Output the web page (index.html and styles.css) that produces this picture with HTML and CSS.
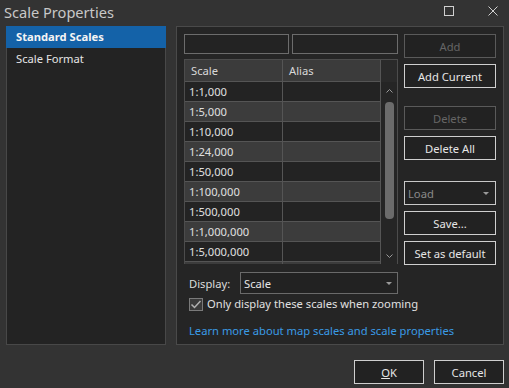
FILE: index.html
```html
<!DOCTYPE html>
<html>
<head>
<meta charset="utf-8">
<link rel="stylesheet" href="styles.css">
</head>
<body>
<div class="dialog">
  <div class="titlebar">
    <span class="title">Scale Properties</span>
    <div class="win-btns">
      <svg class="wbtn" width="12" height="12" viewBox="0 0 12 12"><rect x="1.5" y="1.5" width="9" height="9" fill="none" stroke="#d0d0d0" stroke-width="1"/></svg>
      <svg class="wbtn" width="12" height="12" viewBox="0 0 12 12"><path d="M1.5 1.5 L10.5 10.5 M10.5 1.5 L1.5 10.5" stroke="#d0d0d0" stroke-width="1" fill="none"/></svg>
    </div>
  </div>
  <div class="main">
    <div class="nav">
      <div class="nav-item selected">Standard Scales</div>
      <div class="nav-item">Scale Format</div>
    </div>
    <div class="panel">
      <div class="left-col">
        <div class="inputs">
          <div class="input w1"></div>
          <div class="input w2"></div>
        </div>
        <div class="table">
          <div class="grid">
            <div class="th">Scale</div><div class="th">Alias</div>
            <div class="td">1:1,000</div><div class="td"></div>
            <div class="td alt">1:5,000</div><div class="td alt"></div>
            <div class="td">1:10,000</div><div class="td"></div>
            <div class="td alt">1:24,000</div><div class="td alt"></div>
            <div class="td">1:50,000</div><div class="td"></div>
            <div class="td alt">1:100,000</div><div class="td alt"></div>
            <div class="td">1:500,000</div><div class="td"></div>
            <div class="td alt">1:1,000,000</div><div class="td alt"></div>
            <div class="td">1:5,000,000</div><div class="td"></div>
            <div class="td alt"></div><div class="td alt"></div>
          </div>
          <div class="scroll">
            <div class="scroll-head"></div>
            <svg class="arrow" width="17" height="20" viewBox="0 0 17 20"><path d="M5.5 10.5 L8.5 7.5 L11.5 10.5" stroke="#9a9a9a" stroke-width="1" fill="none"/></svg>
            <div class="thumb"></div>
            <div class="track-rest"></div>
            <svg class="arrow" width="17" height="20" viewBox="0 0 17 20"><path d="M5.5 8.5 L8.5 11.5 L11.5 8.5" stroke="#9a9a9a" stroke-width="1" fill="none"/></svg>
          </div>
        </div>
        <div class="display-row">
          <span class="label">Display:</span>
          <div class="select"><span class="sel-text">Scale</span><span class="caret"></span></div>
        </div>
        <div class="check-row">
          <span class="checkbox"><svg width="12" height="11" viewBox="0 0 12 11"><path d="M1.5 5.5 L4.5 8.5 L10.5 2" stroke="#b0b0b0" stroke-width="1.5" fill="none"/></svg></span>
          <span class="check-label">Only display these scales when zooming</span>
        </div>
        <div class="link">Learn more about map scales and scale properties</div>
      </div>
      <div class="right-col">
        <div class="btn disabled">Add</div>
        <div class="btn g1">Add Current</div>
        <div class="btn disabled g2">Delete</div>
        <div class="btn g3">Delete All</div>
        <div class="btn dropdown g4"><span>Load</span><span class="caret"></span></div>
        <div class="btn g3">Save...</div>
        <div class="btn g3">Set as default</div>
      </div>
    </div>
  </div>
  <div class="footer">
    <div class="btn fbtn"><span class="u">O</span>K</div>
    <div class="btn fbtn">Cancel</div>
  </div>
</div>
</body>
</html>
```
FILE: styles.css
```css
html, body {
  margin: 0;
  padding: 0;
  background: #333333;
  width: 509px;
  height: 388px;
  overflow: hidden;
}
.dialog {
  font-family: "Segoe UI", "Noto Sans", "DejaVu Sans", sans-serif;
  font-size: 11.2px;
  line-height: 15px;
  color: #e2e2e2;
  display: flex;
  flex-direction: column;
  width: 509px;
  height: 388px;
}
.titlebar {
  height: 26px;
  display: flex;
  align-items: center;
  justify-content: space-between;
  padding: 0 6px 0 4px;
}
.title {
  font-size: 14.6px;
  line-height: 20px;
  color: #c8c8c8;
  margin-top: -2px;
}
.win-btns {
  display: flex;
  gap: 32px;
  margin-top: -4px;
  margin-right: 4px;
}
.wbtn { display: block; }
.main {
  display: flex;
  gap: 10px;
  padding: 0 5px 0 6px;
  height: 319px;
}
.nav {
  width: 158px;
  background: #232323;
  border: 1px solid #484848;
  border-top: none;
  display: flex;
  flex-direction: column;
}
.nav-item {
  height: 22px;
  line-height: 21px;
  padding-left: 9px;
  color: #e6e6e6;
}
.nav-item.selected {
  background: #1462a8;
  font-weight: bold;
  color: #f4f4f4;
  margin: 0 -1px;
  padding-left: 10px;
}
.panel {
  flex: 1;
  border: 1px solid #4a4a4a;
  background: #252525;
  display: flex;
  gap: 6px;
  padding: 7px 7px 0 7px;
}
.left-col {
  width: 214px;
  display: flex;
  flex-direction: column;
}
.inputs {
  display: flex;
  gap: 3px;
  height: 19px;
}
.input {
  border: 1px solid #6c6c6c;
  background: #232323;
  box-sizing: border-box;
  height: 20px;
}
.w1 { width: 105px; }
.w2 { width: 106px; }
.table {
  margin-top: 6px;
  height: 205px;
  width: 214px;
  box-sizing: border-box;
  border: 1px solid #4c4c4c;
  border-bottom: none;
  display: flex;
  overflow: hidden;
}
.grid {
  width: 196px;
  display: grid;
  grid-template-columns: 98px 98px;
  grid-auto-rows: 20px;
  grid-template-rows: 22px;
  align-content: start;
}
.th {
  background: #3b3b3b;
  color: #d8d8d8;
  line-height: 21px;
  padding-left: 6px;
  border-bottom: 1px solid #555;
  border-right: 1px solid #555;
  box-sizing: border-box;
}
.td {
  background: #232323;
  color: #e0e0e0;
  line-height: 19px;
  padding-left: 4px;
  border-bottom: 1px solid #555;
  border-right: 1px solid #555;
  box-sizing: border-box;
}
.td.alt { background: #3c3c3c; }
.scroll {
  flex: 1;
  background: #252525;
  display: flex;
  flex-direction: column;
  align-items: center;
}
.scroll-head { height: 22px; width: 100%; background: #2a2a2a; flex: none; }
.arrow { display: block; flex: none; }
.thumb {
  width: 9px;
  height: 117px;
  background: #6b6b6b;
  border-radius: 4px;
  flex: none;
}
.track-rest { height: 27px; flex: none; }
.display-row {
  display: flex;
  align-items: center;
  height: 22px;
  margin-top: 8px;
  padding-left: 5px;
}
.label { color: #dcdcdc; width: 51px; line-height: 15px; }
.select {
  width: 158px;
  height: 22px;
  box-sizing: border-box;
  border: 1px solid #6a6a6a;
  background: #222;
  display: flex;
  align-items: center;
  justify-content: space-between;
  padding: 0 4px 0 3px;
  color: #e6e6e6;
}
.sel-text { line-height: 15px; }
.caret {
  width: 0;
  height: 0;
  border-left: 3px solid transparent;
  border-right: 3px solid transparent;
  border-top: 3px solid #9a9a9a;
  margin-right: 1px;
}
.check-row {
  display: flex;
  align-items: center;
  gap: 4px;
  padding-left: 5px;
  margin-top: 3px;
  height: 14px;
  color: #e0e0e0;
}
.check-label { white-space: nowrap; line-height: 14px; }
.checkbox {
  width: 14px;
  height: 13px;
  box-sizing: border-box;
  border: 1px solid #7a7a7a;
  background: #3a3a3a;
  display: flex;
  align-items: center;
  justify-content: center;
  flex: none;
}
.checkbox svg { display: block; }
.link {
  margin-top: 12px;
  padding-left: 5px;
  color: #3a9be6;
  white-space: nowrap;
}
.right-col {
  width: 92px;
  display: flex;
  flex-direction: column;
}
.btn {
  height: 24px;
  box-sizing: border-box;
  border: 1px solid #cfcfcf;
  background: #222;
  color: #e6e6e6;
  display: flex;
  align-items: center;
  justify-content: center;
}
.btn.disabled {
  border-color: #5a5a5a;
  color: #666;
}
.g1 { margin-top: 6px; }
.g2 { margin-top: 18px; }
.g3 { margin-top: 6px; }
.g4 { margin-top: 21px; }
.btn.dropdown {
  border-color: #c8c8c8;
  justify-content: space-between;
  padding: 0 5px 0 3px;
  color: #8a8a8a;
}
.footer {
  display: flex;
  justify-content: flex-end;
  gap: 10px;
  padding: 15px 5px 0 0;
}
.fbtn { width: 70px; }
.u { text-decoration: underline; }
```
